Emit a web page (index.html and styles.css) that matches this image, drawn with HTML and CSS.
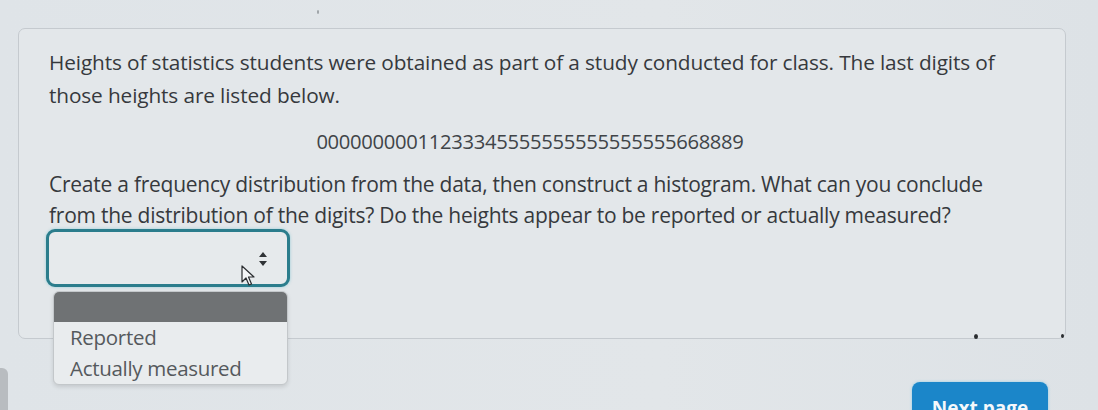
FILE: index.html
```html
<!DOCTYPE html>
<html>
<head>
<meta charset="utf-8">
<link rel="stylesheet" href="styles.css">
</head>
<body>
<div class="screen">
  <span class="speck speck-top"></span>
  <div class="card">
    <p class="intro">Heights of statistics students were obtained as part of a study conducted for class. The last digits of those heights are listed below.</p>
    <p class="digits">00000000011233345555555555555555668889</p>
    <p class="question">Create a frequency distribution from the data, then construct a histogram. What can you conclude from the distribution of the digits? Do the heights appear to be reported or actually measured?</p>
    <div class="select-wrap">
      <div class="select">
        <svg class="updown" width="10" height="16" viewBox="0 0 10 16"><path d="M5 1 L9 6 H1 Z M5 15 L9 10 H1 Z" fill="#2f3336"/></svg>
        <svg class="cursor" width="16" height="22" viewBox="0 0 16 22"><path d="M1 1 L1 17 L5 13 L8 20 L10.5 19 L7.5 12 L13 12 Z" fill="#f4f6f7" stroke="#2a2d30" stroke-width="1.2" stroke-linejoin="round"/></svg>
      </div>
      <div class="menu">
        <div class="menu-blank"></div>
        <div class="menu-item">Reported</div>
        <div class="menu-item">Actually measured</div>
      </div>
    </div>
    <span class="speck speck-a"></span>
  </div>
  <span class="speck speck-b"></span>
  <div class="actions">
    <button class="next">Next page</button>
  </div>
  <div class="edge"></div>
</div>
</body>
</html>
```
FILE: styles.css
```css
html, body {
  margin: 0;
  padding: 0;
}
body {
  width: 1098px;
  height: 410px;
  overflow: hidden;
  background: #dde2e6;
  font-family: "Open Sans", "Noto Sans", sans-serif;
}
.screen {
  position: relative;
  width: 1098px;
  height: 410px;
  padding-top: 28px;
  box-sizing: border-box;
  background: linear-gradient(90deg, #dfe4e8 0%, #e2e6e9 60%, #dde2e6 100%);
}
.card {
  position: relative;
  margin-left: 18px;
  width: 1048px;
  height: 311px;
  box-sizing: border-box;
  border: 1.5px solid #c5cacf;
  border-radius: 7px;
  background: #e3e7ea;
  padding: 17px 30px 0 30px;
  color: #36393d;
}
p {
  margin: 0;
}
.intro {
  font-size: 20.8px;
  line-height: 33px;
  letter-spacing: -0.12px;
  width: 975px;
}
.digits {
  margin-top: 16px;
  text-align: center;
  font-size: 20.2px;
  line-height: 26px;
  letter-spacing: -0.3px;
  color: #404448;
  padding-right: 24px;
}
.question {
  margin-top: 15px;
  font-size: 21px;
  line-height: 31px;
  letter-spacing: -0.25px;
  width: 960px;
}
.select-wrap {
  position: relative;
  margin-top: -2px;
  margin-left: -3px;
  width: 244px;
}
.select {
  position: relative;
  height: 58px;
  box-sizing: border-box;
  border: 3.5px solid #2b7d8c;
  border-radius: 9px;
  background: #e6eaec;
  box-shadow: 0 0 3px rgba(70, 180, 200, 0.5);
}
.updown {
  position: absolute;
  right: 19px;
  top: 19px;
}
.cursor {
  position: absolute;
  left: 192px;
  top: 33px;
}
.menu {
  position: absolute;
  left: 7px;
  top: 62px;
  width: 233px;
  background: #e9ecee;
  border: 1px solid #c3c7ca;
  border-radius: 6px;
  overflow: hidden;
  box-shadow: 0 2px 4px rgba(0, 0, 0, 0.12);
  z-index: 2;
}
.menu-blank {
  height: 30px;
  background: #6f7274;
}
.menu-item {
  padding-left: 16px;
  font-size: 20.5px;
  line-height: 31px;
  letter-spacing: -0.3px;
  color: #55595d;
}
.menu-blank + .menu-item {
  padding-top: 0;
}
.menu-item:last-child {
  padding-bottom: 0;
}
.actions {
  display: flex;
  justify-content: flex-end;
  padding-right: 50px;
  margin-top: 43px;
}
.next {
  width: 136px;
  height: 40px;
  border: none;
  border-radius: 8px 8px 0 0;
  background: #1b86c9;
  color: #f4f8fb;
  font-family: "Open Sans", "Noto Sans", sans-serif;
  font-weight: 700;
  font-size: 19px;
  padding: 11px 0 0 0;
  line-height: 22px;
  box-shadow: 0 0 3px rgba(90, 190, 230, 0.6);
  vertical-align: top;
}
.speck {
  position: absolute;
  width: 4px;
  height: 5px;
  border-radius: 50%;
  background: #2a2d30;
}
.speck-top {
  left: 317px;
  top: 10px;
  width: 2px;
  height: 4px;
  background: #9aa0a4;
}
.speck-a {
  left: 955px;
  top: 305px;
}
.speck-b {
  left: 1061px;
  top: 334px;
  width: 3px;
  height: 4px;
}
.edge {
  position: absolute;
  left: 0;
  top: 368px;
  width: 8px;
  height: 42px;
  background: #b8bcc0;
  border-radius: 0 6px 0 0;
}
```
